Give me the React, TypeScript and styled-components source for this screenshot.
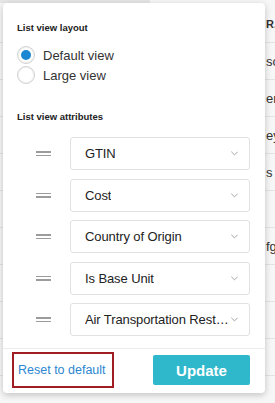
import React from 'react'
import styled, { createGlobalStyle } from 'styled-components'

const GlobalStyle = createGlobalStyle`
  html, body {
    margin: 0;
    padding: 0;
  }
  body {
    font-family: "Liberation Sans", Arial, Helvetica, sans-serif;
    -webkit-font-smoothing: antialiased;
  }
  * {
    box-sizing: border-box;
  }
`

const tableRows = [
  { text: 'R.', head: true },
  { text: 'sc' },
  { text: 'en' },
  { text: 'ey' },
  { text: 's g' },
  { text: '' },
  { text: 'fg' },
  { text: '' },
  { text: '' },
  { text: '' },
  { text: '' },
]

const attributes = ['GTIN', 'Cost', 'Country of Origin', 'Is Base Unit', 'Air Transportation Restrictions']

const Chevron = () => (
  <svg width="7" height="5" viewBox="0 0 7 5" fill="none">
    <path d="M0.6 1 L3.5 3.9 L6.4 1" stroke="#a5a5a5" strokeWidth="1" strokeLinecap="round" strokeLinejoin="round" />
  </svg>
)

const App = () => {
  return (
    <Page>
      <GlobalStyle />
      <TopStrip />
      <Table>
        {tableRows.map((r, i) => (
          <TableRow key={i}>
            <Cell head={r.head}>{r.text}</Cell>
          </TableRow>
        ))}
      </Table>

      <Panel>
        <Heading>List view layout</Heading>
        <RadioGroup>
          <RadioRow>
            <Radio checked />
            <RadioLabel>Default view</RadioLabel>
          </RadioRow>
          <RadioRow>
            <Radio />
            <RadioLabel>Large view</RadioLabel>
          </RadioRow>
        </RadioGroup>

        <Heading second>List view attributes</Heading>
        <AttrList>
          {attributes.map((a) => (
            <AttrRow key={a}>
              <Handle>
                <span />
                <span />
              </Handle>
              <Select>
                <SelectText>{a}</SelectText>
                <Chevron />
              </Select>
            </AttrRow>
          ))}
        </AttrList>

        <Footer>
          <ResetLink>Reset to default</ResetLink>
          <UpdateButton>Update</UpdateButton>
        </Footer>
      </Panel>
    </Page>
  )
}

export default App

const Page = styled.div`
  position: relative;
  width: 275px;
  height: 403px;
  overflow: hidden;
  background: #f7f7f7;
`

const TopStrip = styled.div`
  width: 150px;
  height: 3px;
  background: #e6e6e6;
  margin-bottom: 3px;
`

const Table = styled.div`
  display: flex;
  flex-direction: column;
`

const TableRow = styled.div`
  height: 37px;
  border-bottom: 1px solid #e3e3e3;
  display: flex;
  align-items: center;
`

const Cell = styled.div<{ head?: boolean }>`
  padding-left: 266px;
  white-space: nowrap;
  font-size: ${(p) => (p.head ? '11px' : '13px')};
  font-weight: ${(p) => (p.head ? 700 : 400)};
  color: #333;
`

const Panel = styled.div`
  position: absolute;
  left: 3px;
  top: 3px;
  width: 262px;
  background: #fff;
  border-radius: 4px;
  box-shadow: 0 2px 7px rgba(0, 0, 0, 0.22);
  padding-top: 19px;
  display: flex;
  flex-direction: column;
`

const Heading = styled.div<{ second?: boolean }>`
  font-size: 9.5px;
  line-height: 12px;
  font-weight: 700;
  color: #222;
  padding-left: 14px;
  margin-top: ${(p) => (p.second ? '26px' : '0')};
`

const RadioGroup = styled.div`
  display: flex;
  flex-direction: column;
  margin-top: 11px;
  padding-left: 14px;
`

const RadioRow = styled.div`
  height: 20px;
  display: flex;
  align-items: center;
  gap: 8px;
`

const Radio = styled.span<{ checked?: boolean }>`
  width: 18px;
  height: 18px;
  border-radius: 50%;
  border: 1px solid #d2d2d2;
  box-shadow: inset 0 0 0 1px #f1f1f1;
  background: #fff;
  display: flex;
  align-items: center;
  justify-content: center;

  &::after {
    content: '';
    display: ${(p) => (p.checked ? 'block' : 'none')};
    width: 10px;
    height: 10px;
    border-radius: 50%;
    background: #1b87d3;
  }
`

const RadioLabel = styled.span`
  font-size: 13px;
  color: #333;
`

const AttrList = styled.div`
  display: flex;
  flex-direction: column;
  gap: 8.5px;
  margin-top: 14px;
`

const AttrRow = styled.div`
  display: flex;
  align-items: center;
  padding-left: 33px;
  padding-right: 15px;
  gap: 19px;
`

const Handle = styled.div`
  width: 15px;
  display: flex;
  flex-direction: column;
  gap: 2px;

  span {
    display: block;
    height: 1.5px;
    background: #9c9c9c;
  }
`

const Select = styled.div`
  width: 180px;
  height: 33px;
  border: 1px solid #e1e1e1;
  border-radius: 3px;
  display: flex;
  align-items: center;
  justify-content: space-between;
  padding: 0 11px 0 14px;

  svg {
    flex-shrink: 0;
  }
`

const SelectText = styled.span`
  font-size: 13px;
  letter-spacing: -0.1px;
  color: #222;
  white-space: nowrap;
  overflow: hidden;
  text-overflow: ellipsis;
`

const Footer = styled.div`
  margin-top: 12px;
  border-top: 1px solid #ececec;
  display: flex;
  align-items: center;
  justify-content: space-between;
  padding: 3px 15px 5px 9px;
`

const ResetLink = styled.a`
  height: 36px;
  display: flex;
  align-items: center;
  padding: 0 6px 0 4px;
  border: 2px solid #a01d24;
  font-size: 12.5px;
  color: #2d86cf;
  cursor: pointer;
`

const UpdateButton = styled.button`
  width: 97px;
  height: 30px;
  border: none;
  border-radius: 2px;
  background: #2fb8cb;
  color: #fff;
  font-family: "Liberation Sans", Arial, sans-serif;
  font-size: 15px;
  font-weight: 700;
  cursor: pointer;
`
